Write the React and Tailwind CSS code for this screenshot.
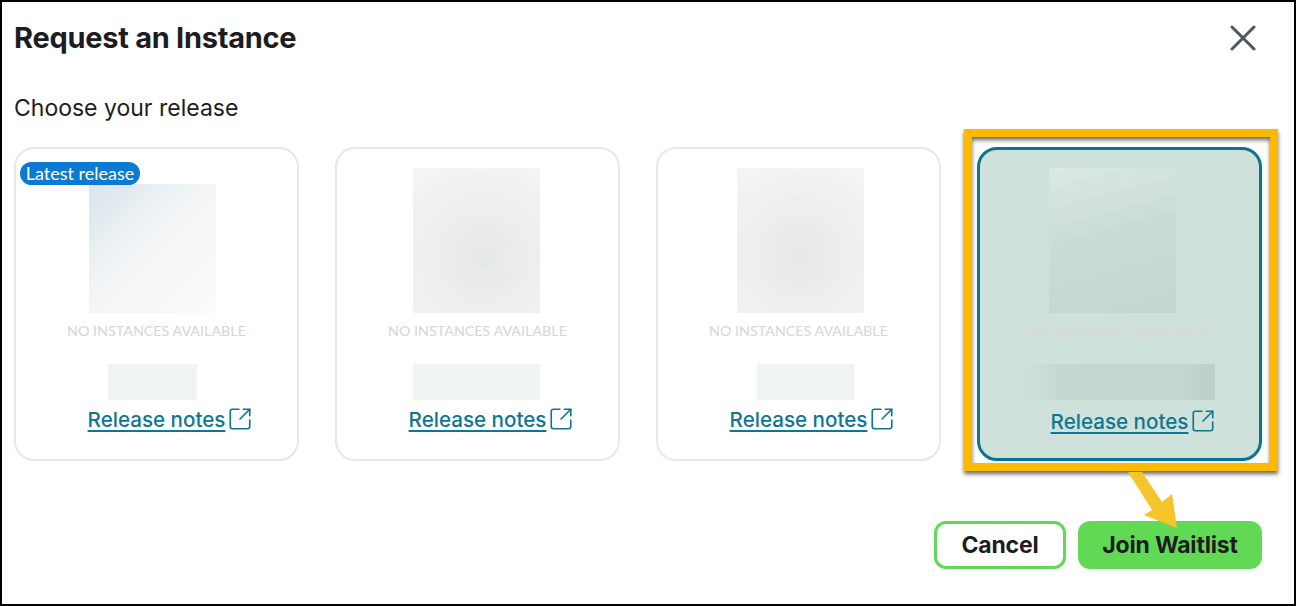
import React from "react";
import { SquareArrowOutUpRight } from "lucide-react";

function ReleaseLink() {
  return (
    <a className="flex items-center h-[28px] ml-[28px] text-[#0f7691] font-['Inter',sans-serif] font-medium text-[20.6px]">
      <span className="underline underline-offset-[3px] decoration-2">Release notes</span>
      <SquareArrowOutUpRight size={26} strokeWidth={1.5} className="ml-[2px] -mt-[3px]" />
    </a>
  );
}

function Card({ imageClass, rectClass, textClass, linkClass, selected, badge }) {
  return (
    <div className={selected
      ? "relative w-[285px] h-[314px] rounded-[20px] border-[3px] border-[#0b7590] bg-[#cfe1db] flex flex-col items-center"
      : "relative w-[285px] h-[314px] rounded-[20px] border-2 border-[#e8e8e8] bg-white flex flex-col items-center"}>
      {badge && (
        <span className="absolute left-[4px] top-[13px] h-[23px] w-[120px] rounded-full bg-[#0a7bd1] text-white text-[18px] leading-[23px] text-center font-['Lato',sans-serif]">
          Latest release
        </span>
      )}
      <div className={imageClass} />
      <div className={textClass}>NO INSTANCES AVAILABLE</div>
      <div className={rectClass} />
      <div className={linkClass}>
        <ReleaseLink />
      </div>
      {selected && (
        <div className="absolute -left-[16px] -right-[19px] -top-[21px] -bottom-[13px] border-[8px] border-[#fdb900] shadow-[0_3px_4px_rgba(0,0,0,0.6),inset_0_3px_4px_rgba(0,0,0,0.6)] pointer-events-none" />
      )}
    </div>
  );
}

export default function App() {
  return (
    <div className="relative w-[1296px] h-[606px] box-border border-2 border-black bg-white overflow-hidden pl-3 pr-8 font-['Inter',sans-serif] text-[#1d1d1f]">
      <div className="flex items-center justify-between pt-[18px] -mr-[32px] pr-[38px]">
        <h1 className="text-[29px] leading-[36px] font-bold tracking-[-0.27px]">Request an Instance</h1>
        <svg width="26" height="26" viewBox="0 0 26 26" fill="none" stroke="#4b5563" strokeWidth="3" strokeLinecap="round">
          <path d="M2 2 L24 24 M24 2 L2 24" />
        </svg>
      </div>
      <h2 className="mt-[38px] text-[23px] leading-[28px] font-normal">Choose your release</h2>

      <div className="mt-[25px] flex gap-9">
        <Card
          badge
          imageClass="mt-[35px] mr-[8px] w-[127px] h-[129px] bg-[linear-gradient(135deg,#d9e4ec_0%,#f2f5f6_45%,#fbfcfc_100%)]"
          textClass="mt-[8px] h-[20px] leading-[20px] text-[14.3px] text-[#d6d6d6] font-['Lato',sans-serif]"
          rectClass="mt-[23px] mr-[8px] w-[89px] h-[36px] bg-[#f0f3f4]"
          linkClass="mt-[6px]"
        />
        <Card
          imageClass="mt-[19px] mr-[2px] w-[127px] h-[145px] bg-[radial-gradient(circle_at_55%_62%,#e6e9e9_0%,#eef0f0_55%,#f4f5f5_100%)]"
          textClass="mt-[8px] h-[20px] leading-[20px] text-[14.3px] text-[#d6d6d6] font-['Lato',sans-serif]"
          rectClass="mt-[23px] mr-[2px] w-[127px] h-[36px] bg-[#f1f4f4]"
          linkClass="mt-[6px]"
        />
        <Card
          imageClass="mt-[19px] ml-[4px] w-[127px] h-[145px] bg-[radial-gradient(circle_at_50%_60%,#e6e9e9_0%,#eef0f0_55%,#f4f5f5_100%)]"
          textClass="mt-[8px] h-[20px] leading-[20px] text-[14.3px] text-[#d6d6d6] font-['Lato',sans-serif]"
          rectClass="mt-[23px] ml-[14px] w-[97px] h-[36px] bg-[#f1f4f4]"
          linkClass="mt-[6px]"
        />
        <Card
          selected
          imageClass="mt-[18px] mr-[14px] w-[127px] h-[145px] bg-[linear-gradient(165deg,#dbe8e5_0%,#cbdcd6_45%,#c3d6cf_100%)]"
          textClass="mt-[10px] h-[20px] leading-[20px] text-[14.3px] text-[#dbd8d8] font-['Lato',sans-serif]"
          rectClass="mt-[21px] w-[190px] h-[36px] bg-[linear-gradient(90deg,#cfe1db_0%,#c4d7d1_20%,#c2d5cf_85%,#bcd0ca_100%)]"
          linkClass="mt-[8px]"
        />
      </div>

      <div className="mt-[60px] flex justify-end gap-3 text-[23px] font-bold">
        <button className="w-[132px] h-[48px] rounded-[12px] border-[3px] border-[#62d955] bg-white tracking-[-0.2px]">Cancel</button>
        <button className="w-[184px] h-[48px] rounded-[12px] bg-[#62d955] tracking-[-0.2px]">Join Waitlist</button>
      </div>

      <svg className="absolute left-[1122px] top-[468px] pointer-events-none" width="60" height="62" viewBox="1124 470 60 62">
        <polygon points="1128,472 1142,472 1162,502 1172,494 1177,528 1144,515 1152,510" fill="#f6c52b" />
      </svg>
    </div>
  );
}
